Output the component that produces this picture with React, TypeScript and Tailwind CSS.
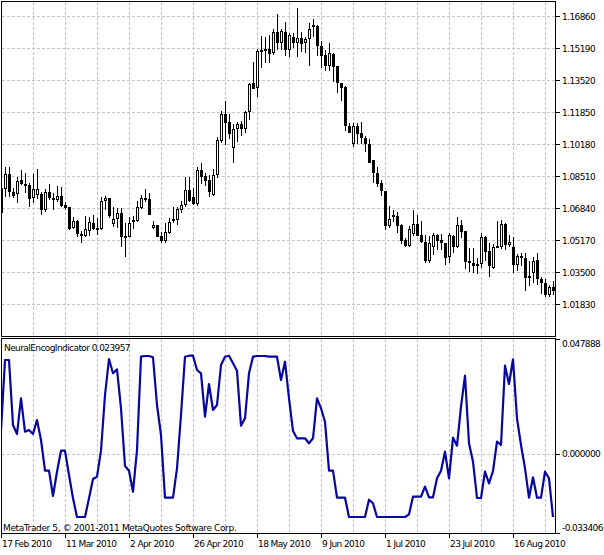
import React from 'react';

type Row = [number, number, number, number, number];

// wick top, wick bottom, body top, body bottom, filled (traced at 3x)
const early: Row[] = [
  [85, 158, 85, 158, 1], [22, 110, 42, 88, 0], [20, 110, 42, 97, 1], [85, 115, 95, 107, 1], [50, 128, 62, 103, 0],
  [30, 75, 60, 73, 1], [40, 100, 72, 77, 1], [70, 140, 75, 118, 1], [42, 128, 88, 113, 0], [28, 118, 88, 105, 0],
  [95, 165, 103, 150, 1], [88, 155, 97, 150, 0], [72, 120, 97, 115, 1], [100, 150, 114, 119, 1], [78, 125, 108, 120, 0],
  [80, 140, 108, 137, 1], [125, 150, 135, 145, 1], [142, 210, 142, 208, 1], [170, 208, 183, 203, 0], [180, 232, 183, 223, 1],
  [212, 248, 222, 227, 1], [168, 232, 208, 228, 0], [172, 228, 186, 214, 0], [165, 210, 190, 208, 1], [175, 225, 204, 208, 1],
  [112, 210, 123, 208, 0], [108, 150, 113, 124, 0], [113, 175, 113, 167, 1], [140, 200, 178, 193, 0], [143, 205, 159, 178, 0],
  [145, 260, 159, 230, 1], [190, 290, 228, 230, 1], [170, 232, 190, 230, 0], [168, 208, 180, 184, 1], [122, 185, 142, 182, 0],
  [105, 148, 114, 143, 0], [88, 125, 113, 118, 1], [100, 164, 118, 164, 1], [184, 208, 196, 203, 0], [195, 232, 195, 232, 1],
  [215, 248, 228, 242, 1], [190, 248, 216, 243, 0], [175, 222, 186, 218, 0], [142, 190, 177, 180, 1], [140, 195, 147, 179, 0],
  [122, 160, 135, 150, 0], [50, 140, 91, 135, 0], [50, 125, 89, 122, 1], [85, 135, 112, 132, 1], [22, 138, 30, 133, 0],
];

const middle: Row[] = [
  [489, 552, 510, 531, 1], [519, 558, 528, 543, 1], [525, 591, 540, 576, 1], [507, 588, 525, 585, 0], [411, 534, 420, 525, 0],
  [332, 430, 343, 422, 0], [303, 435, 343, 370, 1], [343, 417, 367, 402, 1], [372, 490, 388, 445, 0], [365, 425, 372, 388, 0],
  [362, 408, 372, 387, 1], [333, 400, 335, 387, 0], [250, 360, 252, 337, 0], [187, 267, 250, 267, 1], [148, 290, 153, 265, 0],
  [108, 203, 150, 155, 1], [112, 188, 147, 150, 1], [105, 188, 147, 162, 1], [88, 165, 97, 158, 0], [42, 150, 96, 128, 1],
  [88, 150, 94, 128, 0], [66, 168, 96, 150, 1], [100, 170, 105, 150, 0], [100, 145, 110, 128, 1], [24, 172, 114, 128, 0],
  [96, 155, 114, 132, 1], [112, 158, 118, 130, 0], [70, 197, 88, 118, 0], [57, 110, 75, 80, 1], [75, 167, 78, 137, 1],
  [122, 205, 138, 167, 1], [150, 213, 165, 197, 1], [128, 212, 160, 197, 0], [160, 245, 162, 200, 1], [198, 278, 198, 250, 1],
  [250, 302, 250, 263, 1], [258, 392, 262, 377, 1], [370, 400, 377, 398, 1], [368, 440, 378, 432, 0], [368, 432, 378, 402, 1],
  [365, 432, 400, 415, 1], [408, 455, 414, 433, 1], [418, 490, 432, 488, 1], [480, 549, 480, 519, 1], [501, 561, 519, 552, 1],
  [540, 588, 549, 573, 1], [573, 690, 573, 678, 1], [618, 684, 657, 678, 0], [630, 666, 645, 651, 0], [635, 699, 648, 678, 1],
  [672, 732, 675, 723, 1],
];

const late: Row[] = [
  [235, 262, 240, 258, 1], [198, 262, 208, 258, 0], [150, 228, 192, 222, 0], [165, 228, 192, 228, 1], [182, 250, 226, 246, 1],
  [225, 310, 246, 302, 1], [228, 310, 250, 302, 0], [218, 285, 225, 262, 0], [222, 270, 225, 242, 1], [222, 270, 240, 248, 1],
  [248, 315, 250, 294, 1], [218, 308, 226, 292, 0], [225, 280, 228, 260, 1], [170, 265, 195, 260, 0], [180, 234, 195, 215, 1],
  [213, 327, 213, 305, 1], [265, 335, 303, 305, 1], [265, 340, 310, 318, 1], [295, 342, 312, 318, 1], [220, 325, 232, 313, 0],
  [228, 302, 230, 275, 1], [250, 350, 273, 318, 1], [252, 327, 260, 325, 0], [182, 265, 258, 263, 1], [180, 268, 192, 262, 0],
  [188, 270, 192, 255, 1], [225, 262, 247, 255, 0], [232, 338, 262, 314, 1], [282, 333, 288, 314, 0], [280, 318, 288, 295, 1],
  [278, 392, 295, 355, 1], [302, 378, 347, 355, 0], [290, 370, 302, 340, 0], [280, 375, 300, 358, 1], [352, 402, 358, 370, 1],
  [358, 412, 370, 404, 1], [375, 412, 380, 404, 0], [362, 405, 382, 392, 1],
];

const candles = [
  ...early.map((r) => ({ r, off: 160 })),
  ...middle.map((r) => ({ r, off: 0 })),
  ...late.map((r) => ({ r, off: 160 })),
].map(({ r, off }, i) => ({
  x: 1 + i * 4,
  wt: Math.round(off + r[0] / 3),
  wb: Math.round(off + r[1] / 3),
  bt: Math.round(off + r[2] / 3),
  bb: Math.round(off + r[3] / 3),
  filled: r[4] === 1,
}));

// indicator values, same tracing, one per candle
const signal = [
  285, 75, 75, 270, 297, 190, 290, 285, 297, 255, 315, 407, 407, 483, 410, 347, 347, 420, 490, 546, 546, 546, 490, 432, 425,
  347, 180, 72, 115, 103, 220, 393, 407, 470, 345, 65, 63, 63, 67, 210, 300, 488, 488, 488, 400, 240, 65, 62, 62, 105,
  115, 245, 147, 225, 210, 90, 65, 62, 85, 107, 272, 250, 115, 65, 63, 63, 63, 65, 65, 65, 135, 80, 190, 288, 310, 310, 310,
  325, 310, 190, 220, 260, 407, 407, 488, 488, 488, 546, 546, 546, 546, 546, 494, 505, 546, 546, 546, 546, 546, 546, 546,
  546, 538, 485, 485, 485, 455, 487, 487, 430, 407, 350, 430, 308, 332, 215, 122, 325, 380, 489, 489, 410, 445, 408, 320,
  330, 92, 147, 73, 250, 330, 400, 488, 427, 488, 488, 410, 430, 546,
];

const signalPoints = signal.map((v, i) => `${1 + i * 4},${(335 + v / 3).toFixed(1)}`).join(' ');

const gridX = Array.from({ length: 17 }, (_, i) => 33 + i * 32);
const gridY = Array.from({ length: 10 }, (_, i) => 16 + i * 32);

const prices = ['1.16860', '1.15190', '1.13520', '1.11850', '1.10180', '1.08510', '1.06840', '1.05170', '1.03500', '1.01830'];
const dates = ['17 Feb 2010', '11 Mar 2010', '2 Apr 2010', '26 Apr 2010', '18 May 2010', '9 Jun 2010', '1 Jul 2010', '23 Jul 2010', '16 Aug 2010'];

const GridLines: React.FC<{ ys: number[]; top: number; bottom: number }> = ({ ys, top, bottom }) => (
  <g stroke="#c4c4c4" strokeWidth="1" strokeDasharray="3 2" shapeRendering="crispEdges">
    {gridX.map((x) => (
      <line key={x} x1={x + 0.5} x2={x + 0.5} y1={top} y2={bottom} />
    ))}
    {ys.map((y) => (
      <line key={y} x1={2} x2={555} y1={y + 0.5} y2={y + 0.5} />
    ))}
  </g>
);

const PriceChart: React.FC = () => (
  <svg width="553" height="334" viewBox="2 2 553 334" className="block">
    <GridLines ys={gridY} top={2} bottom={336} />
    <g shapeRendering="crispEdges">
      {candles.map((c) => (
        <g key={c.x}>
          <rect x={c.x} y={c.wt} width="1" height={c.wb - c.wt} fill="#000" />
          {c.filled ? (
            <rect x={c.x - 1} y={c.bt} width="3" height={Math.max(c.bb - c.bt, 2)} fill="#000" />
          ) : (
            <rect x={c.x - 0.5} y={c.bt + 0.5} width="2" height={Math.max(c.bb - c.bt - 1, 1)} fill="#fff" stroke="#000" />
          )}
        </g>
      ))}
    </g>
  </svg>
);

const SignalChart: React.FC = () => (
  <svg width="553" height="194" viewBox="2 339 553 194" className="block">
    <GridLines ys={[454]} top={339} bottom={533} />
    <polyline points={signalPoints} fill="none" stroke="#0606a0" strokeWidth="2.2" strokeLinejoin="round" />
  </svg>
);

const Tick = () => <div className="w-1 h-px shrink-0 bg-black" />;

export default function App() {
  return (
    <div className="w-[604px] h-[555px] bg-white text-black text-[9px] leading-[12px] tracking-[-0.6px] font-['DejaVu_Sans',Verdana,sans-serif] overflow-hidden">
      <div className="flex h-[338px]">
        <div className="w-[556px] pl-px pt-px shrink-0">
          <div className="w-[555px] h-[336px] border border-black">
            <PriceChart />
          </div>
        </div>
        <div className="flex flex-col">
          {prices.map((p) => (
            <div key={p} className="flex items-center h-[32px] gap-[2px]">
              <Tick />
              <span className="pt-[2px]">{p}</span>
            </div>
          ))}
        </div>
      </div>

      <div className="flex h-[196px]">
        <div className="w-[556px] pl-px shrink-0">
          <div className="relative w-[555px] h-[196px] border border-black">
            <SignalChart />
            <span className="absolute left-[2px] top-[3px] tracking-[-0.58px]">NeuralEncogIndicator 0.023957</span>
            <span className="absolute left-[1px] bottom-[-1px] tracking-[-0.38px]">MetaTrader 5, © 2001-2011 MetaQuotes Software Corp.</span>
          </div>
        </div>
        <div className="flex flex-col">
          <div className="flex items-start h-[12px] mt-px gap-[2px]">
            <Tick />
            <span className="-mt-px">0.047888</span>
          </div>
          <div className="flex items-center h-[12px] mt-[97px] gap-[2px]">
            <Tick />
            <span>0.000000</span>
          </div>
          <div className="flex items-end h-[12px] mt-[62px] gap-[2px]">
            <Tick />
            <span>-0.033406</span>
          </div>
        </div>
      </div>

      <div className="flex pl-px">
        {dates.map((d) => (
          <div key={d} className="flex w-[64px] shrink-0 whitespace-nowrap">
            <div className="w-px h-1 shrink-0 bg-black" />
            <span className="mt-[4px]">{d}</span>
          </div>
        ))}
      </div>
    </div>
  );
}
